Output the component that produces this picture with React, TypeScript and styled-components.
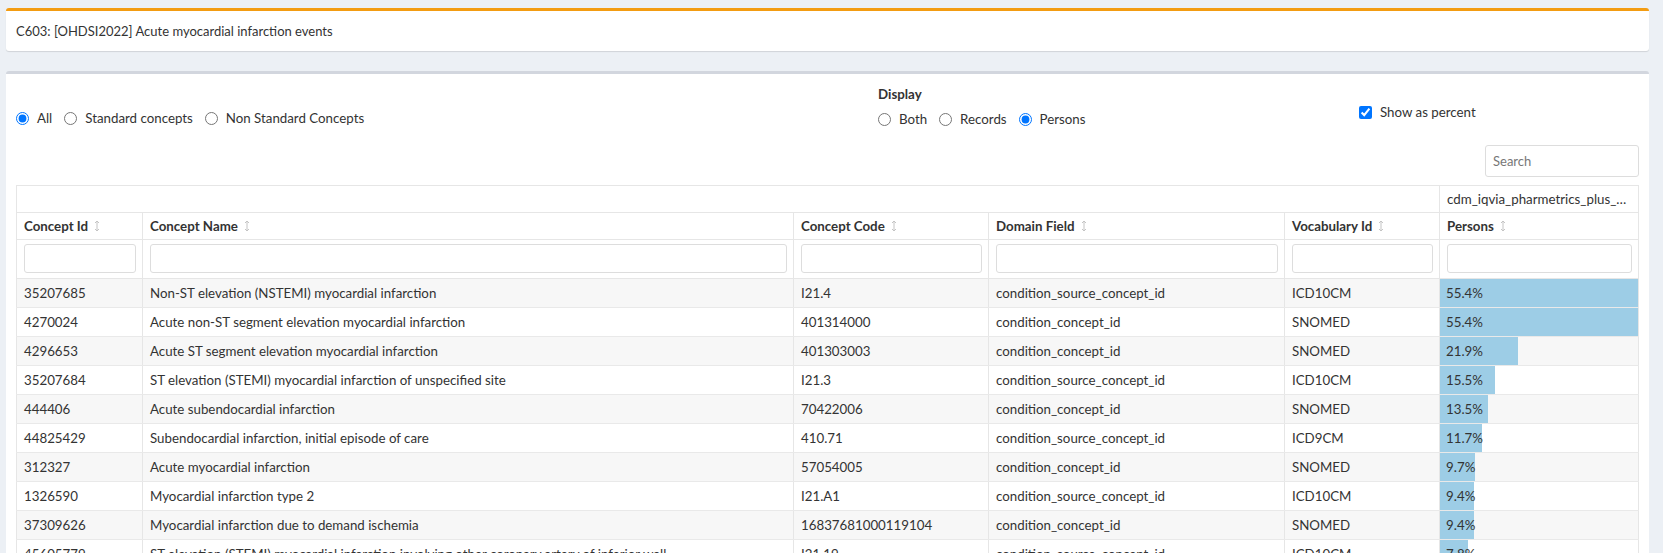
import * as React from 'react';
import styled, { createGlobalStyle } from 'styled-components';

const GlobalStyle = createGlobalStyle`
  body {
    margin: 0;
    background: #ecf0f5;
    font-family: Lato, "Noto Sans", sans-serif;
    font-size: 13.3px;
    color: #333;
  }
  * { box-sizing: border-box; }
`;

const Page = styled.div`
  padding: 8px 14px 0 6px;
`;

const TitleBox = styled.div`
  background: #fff;
  border-top: 3px solid #f39c12;
  border-radius: 3px;
  box-shadow: 0 1px 1px rgba(0, 0, 0, 0.12);
  height: 43px;
  padding: 0 10px;
  display: flex;
  align-items: center;
  font-size: 13px;
`;

const MainBox = styled.div`
  margin-top: 20px;
  background: #fff;
  border-top: 3px solid #d2d6de;
  border-radius: 3px;
  padding: 0 10px 10px 10px;
`;

const Controls = styled.div`
  display: grid;
  grid-template-columns: 862px 481px 1fr;
  height: 71px;
`;

const ControlCol = styled.div<{ $top: number }>`
  padding-top: ${(p) => p.$top}px;
`;

const Label = styled.div`
  font-weight: 700;
  margin-bottom: 9px;
`;

const RadioRow = styled.div`
  display: flex;
  gap: 12px;
`;

const Option = styled.label`
  display: flex;
  align-items: center;
  gap: 8px;
  cursor: pointer;
`;

const Radio = styled.input.attrs({ type: 'radio' })`
  width: 13px;
  height: 13px;
  margin: 0;
  flex-shrink: 0;
`;

const Check = styled.input.attrs({ type: 'checkbox' })`
  width: 13px;
  height: 13px;
  margin: 0;
  flex-shrink: 0;
`;

const SearchRow = styled.div`
  display: flex;
  justify-content: flex-end;
  margin-bottom: 8px;
`;

const SearchInput = styled.input`
  width: 154px;
  height: 32px;
  border: 1px solid #ddd;
  border-radius: 3px;
  padding: 0 7px;
  font-family: inherit;
  font-size: 13px;
  color: #333;
  &::placeholder { color: #777; }
`;

const Table = styled.table`
  width: 100%;
  border-collapse: collapse;
  table-layout: fixed;
  border: 1px solid #e6e6e6;
`;

const GroupTh = styled.th`
  height: 27px;
  padding: 0 9px 0 7px;
  text-align: left;
  font-weight: 400;
  border-bottom: 1px solid #e6e6e6;
  border-left: 1px solid #e6e6e6;
  white-space: nowrap;
  overflow: hidden;
  text-overflow: ellipsis;
`;

const Th = styled.th`
  height: 27px;
  padding: 0 7px;
  text-align: left;
  font-weight: 700;
  border-bottom: 1px solid #e6e6e6;
  border-left: 1px solid #e6e6e6;
  white-space: nowrap;
`;

const FilterTd = styled.td`
  height: 38px;
  padding: 4px 6px 5px 7px;
  border-left: 1px solid #e6e6e6;
  border-bottom: 1px solid #e6e6e6;
`;

const FilterInput = styled.input`
  width: 100%;
  height: 29px;
  border: 1px solid #ddd;
  border-radius: 3px;
  display: block;
`;

const Tr = styled.tr<{ $striped: boolean }>`
  background: ${(p) => (p.$striped ? '#f7f7f7' : '#fff')};
`;

const Td = styled.td`
  height: 29px;
  padding: 0 7px;
  border-left: 1px solid #e6e6e6;
  border-bottom: 1px solid #e9e9e9;
  white-space: nowrap;
  overflow: hidden;
`;

const BarTd = styled(Td)`
  padding: 0 6px;
  background-repeat: no-repeat;
`;

const SortIcon = () => (
  <svg width="8" height="12" viewBox="0 0 8 12" style={{ marginLeft: 5, verticalAlign: -1 }}>
    <path d="M4 1 V11 M2 3 L4 1 L6 3 M2 9 L4 11 L6 9" stroke="#c4c4c4" strokeWidth="1" fill="none" />
  </svg>
);

type Row = [string, string, string, string, string, number];

const rows: Row[] = [
  ['35207685', 'Non-ST elevation (NSTEMI) myocardial infarction', 'I21.4', 'condition_source_concept_id', 'ICD10CM', 55.4],
  ['4270024', 'Acute non-ST segment elevation myocardial infarction', '401314000', 'condition_concept_id', 'SNOMED', 55.4],
  ['4296653', 'Acute ST segment elevation myocardial infarction', '401303003', 'condition_concept_id', 'SNOMED', 21.9],
  ['35207684', 'ST elevation (STEMI) myocardial infarction of unspecified site', 'I21.3', 'condition_source_concept_id', 'ICD10CM', 15.5],
  ['444406', 'Acute subendocardial infarction', '70422006', 'condition_concept_id', 'SNOMED', 13.5],
  ['44825429', 'Subendocardial infarction, initial episode of care', '410.71', 'condition_source_concept_id', 'ICD9CM', 11.7],
  ['312327', 'Acute myocardial infarction', '57054005', 'condition_concept_id', 'SNOMED', 9.7],
  ['1326590', 'Myocardial infarction type 2', 'I21.A1', 'condition_source_concept_id', 'ICD10CM', 9.4],
  ['37309626', 'Myocardial infarction due to demand ischemia', '16837681000119104', 'condition_concept_id', 'SNOMED', 9.4],
  ['45605779', 'ST elevation (STEMI) myocardial infarction involving other coronary artery of inferior wall', 'I21.19', 'condition_source_concept_id', 'ICD10CM', 7.8],
];

const columns = ['Concept Id', 'Concept Name', 'Concept Code', 'Domain Field', 'Vocabulary Id', 'Persons'];
const widths = [126, 651, 195, 296, 155, 199];
const maxValue = Math.max(...rows.map((r) => r[5]));

export default function App() {
  return (
    <Page>
      <GlobalStyle />
      <TitleBox>C603: [OHDSI2022] Acute myocardial infarction events</TitleBox>
      <MainBox>
        <Controls>
          <ControlCol $top={36}>
            <RadioRow>
              <Option><Radio name="std" defaultChecked />All</Option>
              <Option><Radio name="std" />Standard concepts</Option>
              <Option><Radio name="std" />Non Standard Concepts</Option>
            </RadioRow>
          </ControlCol>
          <ControlCol $top={12}>
            <Label>Display</Label>
            <RadioRow>
              <Option><Radio name="display" />Both</Option>
              <Option><Radio name="display" />Records</Option>
              <Option><Radio name="display" defaultChecked />Persons</Option>
            </RadioRow>
          </ControlCol>
          <ControlCol $top={30}>
            <Option>
              <Check defaultChecked />
              Show as percent
            </Option>
          </ControlCol>
        </Controls>
        <SearchRow>
          <SearchInput placeholder="Search" />
        </SearchRow>
        <Table>
          <colgroup>
            {widths.map((w, i) => (
              <col key={i} style={{ width: w }} />
            ))}
          </colgroup>
          <thead>
            <tr>
              <GroupTh colSpan={5} />
              <GroupTh>cdm_iqvia_pharmetrics_plus_v2323</GroupTh>
            </tr>
            <tr>
              {columns.map((c) => (
                <Th key={c}>
                  {c}
                  <SortIcon />
                </Th>
              ))}
            </tr>
            <tr>
              {columns.map((c) => (
                <FilterTd key={c}>
                  <FilterInput />
                </FilterTd>
              ))}
            </tr>
          </thead>
          <tbody>
            {rows.map((r, i) => {
              const pct = (r[5] / maxValue) * 100;
              return (
                <Tr key={r[0]} $striped={i % 2 === 0}>
                  <Td>{r[0]}</Td>
                  <Td>{r[1]}</Td>
                  <Td>{r[2]}</Td>
                  <Td>{r[3]}</Td>
                  <Td>{r[4]}</Td>
                  <BarTd
                    style={{
                      backgroundImage: `linear-gradient(to right, #9dcde6 ${pct}%, transparent ${pct}%)`,
                    }}
                  >
                    {r[5].toFixed(1)}%
                  </BarTd>
                </Tr>
              );
            })}
          </tbody>
        </Table>
      </MainBox>
    </Page>
  );
}
